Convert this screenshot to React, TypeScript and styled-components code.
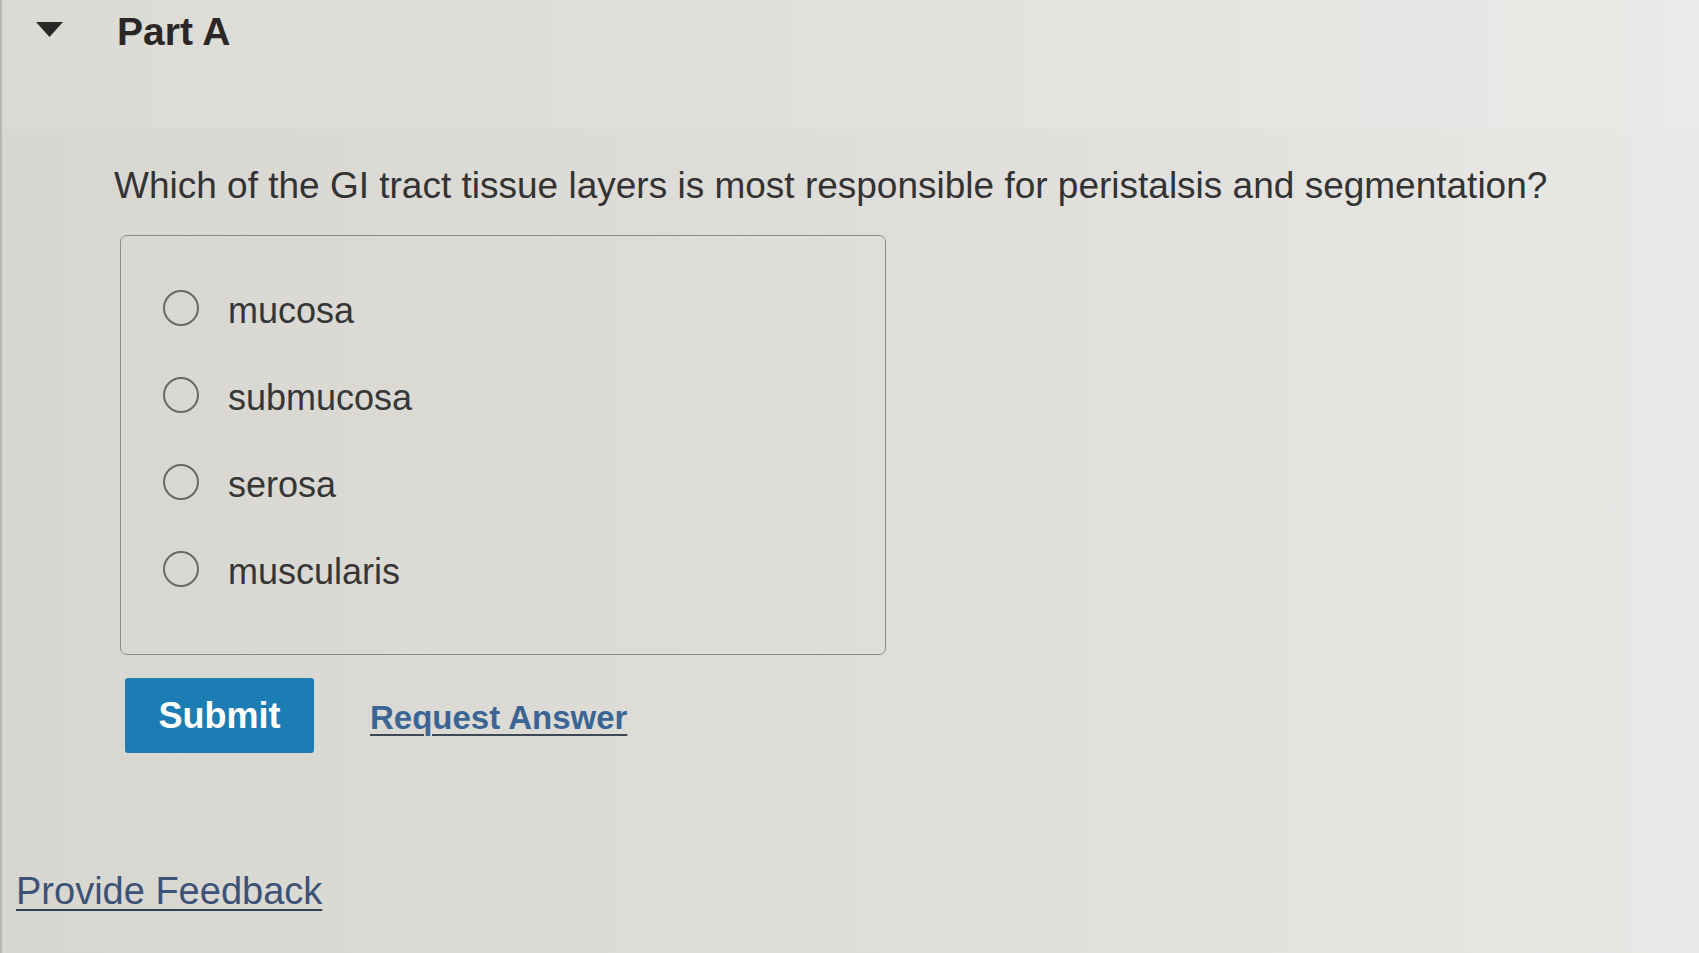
import { FC } from "react";
import styled, { createGlobalStyle } from "styled-components";

const GlobalStyle = createGlobalStyle`
  html, body {
    margin: 0;
    padding: 0;
  }
  body {
    width: 1699px;
    height: 953px;
    overflow: hidden;
    font-family: "Liberation Sans", Arial, Helvetica, sans-serif;
    background: linear-gradient(90deg, #d8d6d0 0%, #dddbd6 35%, #e2e1dd 70%, #e8e8e6 100%);
  }
`;

const Page = styled.div`
  width: 1699px;
  height: 953px;
  box-sizing: border-box;
  border-left: 2px solid #b9b7b1;
`;

const Header = styled.div`
  display: flex;
  align-items: flex-start;
  box-sizing: border-box;
  height: 129px;
  padding: 7px 0 0 33px;
  background: rgba(255, 255, 255, 0.1);
`;

const Caret = styled.svg`
  width: 29px;
  height: 17px;
  margin-top: 14px;
  flex-shrink: 0;
`;

const PartTitle = styled.h2`
  margin: 0 0 0 53px;
  font-size: 39px;
  line-height: 50px;
  font-weight: 700;
  color: #2b2727;
`;

const Content = styled.div`
  padding-left: 112px;
`;

const Question = styled.p`
  margin: 35px 0 0;
  font-size: 37px;
  line-height: 44px;
  color: #333333;
`;

const OptionsBox = styled.div`
  box-sizing: border-box;
  width: 766px;
  height: 420px;
  margin: 27px 0 0 6px;
  padding: 28px 0 0 42px;
  border: 1.5px solid #8c8b88;
  border-radius: 7px;
`;

const OptionRow = styled.label`
  display: flex;
  align-items: center;
  height: 87px;
  cursor: pointer;
`;

const Radio = styled.span`
  box-sizing: border-box;
  width: 36px;
  height: 36px;
  border: 2.5px solid #6a6967;
  border-radius: 50%;
  flex-shrink: 0;
`;

const OptionLabel = styled.span`
  margin-left: 29px;
  padding-top: 6px;
  font-size: 36px;
  line-height: 44px;
  color: #363636;
`;

const Actions = styled.div`
  display: flex;
  align-items: center;
  margin: 23px 0 0 11px;
`;

const SubmitButton = styled.button`
  width: 189px;
  height: 75px;
  border: none;
  border-radius: 3px;
  background: #1b7db3;
  color: #ffffff;
  font-family: "Liberation Sans", Arial, sans-serif;
  font-size: 36px;
  font-weight: 700;
  cursor: pointer;
`;

const RequestLink = styled.a`
  margin-left: 56px;
  padding-top: 4px;
  font-size: 33px;
  font-weight: 700;
  color: #3b6594;
  text-decoration: underline;
  text-decoration-color: #3e4854;
  text-decoration-thickness: 2px;
  text-underline-offset: 5px;
  cursor: pointer;
`;

const Footer = styled.div`
  padding-left: 14px;
  margin-top: 115px;
`;

const FeedbackLink = styled.a`
  font-size: 38px;
  line-height: 46px;
  color: #3d5277;
  text-decoration: underline;
  text-decoration-color: #2f3d55;
  text-decoration-thickness: 2px;
  text-underline-offset: 5px;
  cursor: pointer;
`;

const options = ["mucosa", "submucosa", "serosa", "muscularis"];

const App: FC = () => {
  return (
    <>
      <GlobalStyle />
      <Page>
        <Header>
          <Caret viewBox="0 0 29 17">
            <path d="M1 1 H28 L14.5 16 Z" fill="#2a2727" />
          </Caret>
          <PartTitle>Part A</PartTitle>
        </Header>

        <Content>
          <Question>
            Which of the GI tract tissue layers is most responsible for peristalsis and segmentation?
          </Question>

          <OptionsBox>
            {options.map((opt) => (
              <OptionRow key={opt}>
                <Radio />
                <OptionLabel>{opt}</OptionLabel>
              </OptionRow>
            ))}
          </OptionsBox>

          <Actions>
            <SubmitButton>Submit</SubmitButton>
            <RequestLink>Request Answer</RequestLink>
          </Actions>
        </Content>

        <Footer>
          <FeedbackLink>Provide Feedback</FeedbackLink>
        </Footer>
      </Page>
    </>
  );
};

export default App;
